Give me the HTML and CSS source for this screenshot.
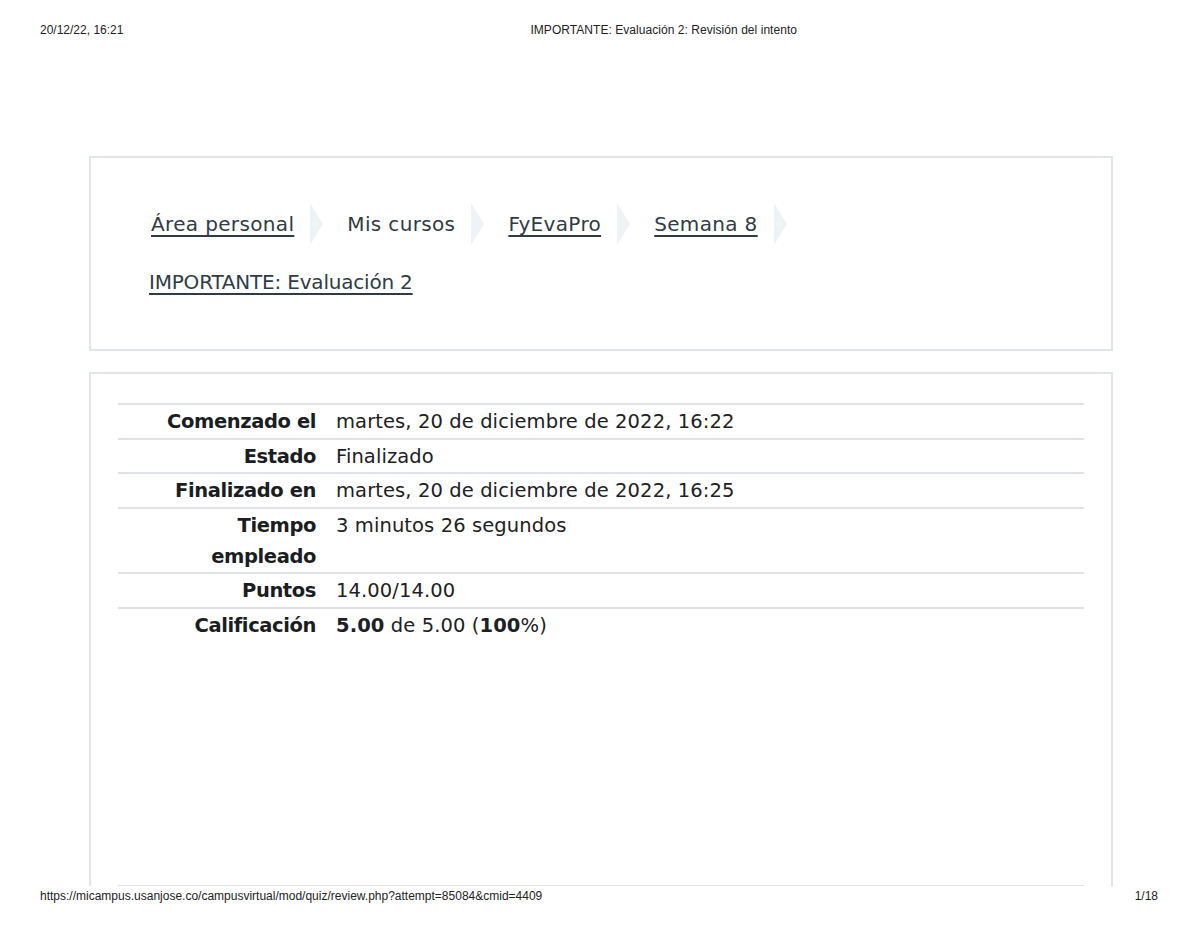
FILE: index.html
```html
<!DOCTYPE html>
<html lang="es">
<head>
<meta charset="utf-8">
<title>IMPORTANTE: Evaluación 2: Revisión del intento</title>
<link rel="stylesheet" href="styles.css">
</head>
<body>
<header class="print-head">
  <span class="date">20/12/22, 16:21</span>
  <span class="doc-title">IMPORTANTE: Evaluación 2: Revisión del intento</span>
</header>

<section class="card nav-card">
  <nav class="crumbs">
    <a class="crumb link" href="#">Área personal</a>
    <svg class="sep" viewBox="0 0 14 42" width="14" height="42"><polygon points="0,0 13,21 0,42" fill="#eef3f7"/></svg>
    <span class="crumb">Mis cursos</span>
    <svg class="sep" viewBox="0 0 14 42" width="14" height="42"><polygon points="0,0 13,21 0,42" fill="#eef3f7"/></svg>
    <a class="crumb link" href="#">FyEvaPro</a>
    <svg class="sep" viewBox="0 0 14 42" width="14" height="42"><polygon points="0,0 13,21 0,42" fill="#eef3f7"/></svg>
    <a class="crumb link" href="#">Semana 8</a>
    <svg class="sep" viewBox="0 0 14 42" width="14" height="42"><polygon points="0,0 13,21 0,42" fill="#eef3f7"/></svg>
  </nav>
  <div class="crumbs second">
    <a class="crumb link" href="#">IMPORTANTE: Evaluación 2</a>
  </div>
</section>

<section class="card summary-card">
  <table class="summary">
    <tbody>
      <tr><th>Comenzado el</th><td>martes, 20 de diciembre de 2022, 16:22</td></tr>
      <tr><th>Estado</th><td>Finalizado</td></tr>
      <tr><th>Finalizado en</th><td>martes, 20 de diciembre de 2022, 16:25</td></tr>
      <tr><th>Tiempo empleado</th><td>3 minutos 26 segundos</td></tr>
      <tr><th>Puntos</th><td>14.00/14.00</td></tr>
      <tr><th>Calificación</th><td><b>5.00</b> de 5.00 (<b>100</b>%)</td></tr>
    </tbody>
  </table>
  <div class="next-rule"></div>
</section>

<footer class="print-foot">
  <span>https://micampus.usanjose.co/campusvirtual/mod/quiz/review.php?attempt=85084&amp;cmid=4409</span>
  <span>1/18</span>
</footer>
</body>
</html>
```

FILE: styles.css
```css
html, body {
  margin: 0;
  padding: 0;
  background: #ffffff;
}

body {
  width: 1200px;
  height: 927px;
  overflow: hidden;
  font-family: "DejaVu Sans", "Noto Sans", sans-serif;
  color: #1d2125;
}

.print-head {
  display: flex;
  padding: 22px 0 0 40px;
  height: 16px;
  font-family: "Liberation Sans", Arial, sans-serif;
  font-size: 12px;
  line-height: 16px;
  color: #222;
}

.print-head .doc-title {
  margin-left: 407px;
  letter-spacing: 0.05px;
}

.card {
  box-sizing: border-box;
  width: 1024px;
  margin-left: 89px;
  border: 2px solid #dfe5e9;
  background: #fff;
}

.nav-card {
  margin-top: 118px;
  height: 195px;
  padding: 45px 0 0 60px;
}

.crumbs {
  display: flex;
  align-items: center;
  height: 42px;
}

.crumb {
  font-size: 20px;
  line-height: 42px;
  color: #2f3c47;
  letter-spacing: 0.35px;
}

.link {
  text-decoration: underline;
  text-underline-offset: 4px;
  text-decoration-thickness: 2px;
  color: #2f3c47;
}

.sep {
  display: block;
  margin: 0 23px 0 16px;
}

.crumbs.second {
  margin-top: 16px;
  margin-left: -2px;
}

.crumbs.second .crumb {
  letter-spacing: -0.2px;
}

.summary-card {
  margin-top: 21px;
  height: 514px;
  overflow: hidden;
  border-bottom: none;
  padding: 29px 27px 0 27px;
}

.summary {
  width: 100%;
  border-collapse: collapse;
  font-size: 19.5px;
}

.summary tr {
  border-top: 2px solid #dfe3e7;
}

.summary th {
  width: 170px;
  padding: 1px 10px 0.6px 28px;
  text-align: right;
  vertical-align: top;
  font-weight: 700;
  line-height: 31px;
  letter-spacing: -0.4px;
  color: #1a1d21;
}

.summary td {
  padding: 1px 0 0.6px 10px;
  vertical-align: top;
  line-height: 31px;
  letter-spacing: 0.1px;
  color: #1d2125;
}

.summary td b {
  font-weight: 700;
}

.next-rule {
  margin-top: 243px;
  height: 2px;
  background: #dfe3e7;
}

.print-foot {
  display: flex;
  justify-content: space-between;
  box-sizing: border-box;
  width: 1200px;
  margin-top: 2px;
  padding: 0 42px 0 40px;
  font-family: "Liberation Sans", Arial, sans-serif;
  font-size: 12px;
  line-height: 16px;
  color: #222;
}
```
